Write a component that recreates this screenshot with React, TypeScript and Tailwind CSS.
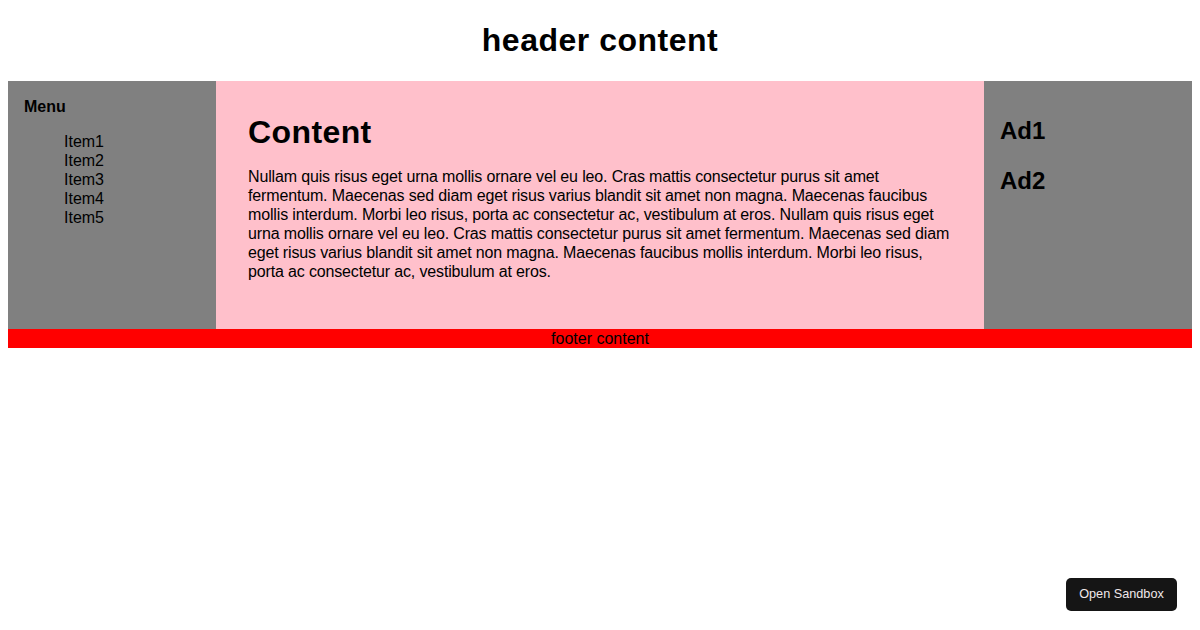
import React from "react";

const items = ["Item1", "Item2", "Item3", "Item4", "Item5"];

const text =
  "Nullam quis risus eget urna mollis ornare vel eu leo. Cras mattis consectetur purus sit amet fermentum. Maecenas sed diam eget risus varius blandit sit amet non magna. Maecenas faucibus mollis interdum. Morbi leo risus, porta ac consectetur ac, vestibulum at eros. Nullam quis risus eget urna mollis ornare vel eu leo. Cras mattis consectetur purus sit amet fermentum. Maecenas sed diam eget risus varius blandit sit amet non magna. Maecenas faucibus mollis interdum. Morbi leo risus, porta ac consectetur ac, vestibulum at eros.";

export default function App() {
  return (
    <div className="min-h-[630px] bg-white px-2 text-black text-base font-['Liberation_Sans',Arial,sans-serif]">
      <header className="h-[81px] flex items-center justify-center">
        <h1 className="text-[32px] font-bold leading-[37px] tracking-[0.5px]">header content</h1>
      </header>

      <div className="grid grid-cols-[208px_1fr_208px]">
        <nav className="bg-[#808080] p-4">
          <h4 className="font-bold leading-[19px] mb-4">Menu</h4>
          <ul className="pl-10 leading-[19px]">
            {items.map(i => (
              <li key={i}>{i}</li>
            ))}
          </ul>
        </nav>

        <main className="bg-[#ffc0cb] px-8 pt-[33px] pb-8">
          <h1 className="text-[32px] font-bold leading-[37px] tracking-[0.4px] mb-4">Content</h1>
          <p className="leading-[19px] tracking-[-0.15px] mb-4">{text}</p>
        </main>

        <aside className="bg-[#808080] p-4">
          <h2 className="text-2xl font-bold leading-[28px] mt-5 mb-[22px]">Ad1</h2>
          <h2 className="text-2xl font-bold leading-[28px]">Ad2</h2>
        </aside>
      </div>

      <footer className="bg-[#ff0000] h-[19px] leading-[19px] text-center">footer content</footer>

      <button className="fixed right-[23px] bottom-[19px] w-[111px] h-[33px] rounded-[5px] bg-[#151515] text-[#f0e8ea] text-[12.7px] flex items-center justify-center">
        Open Sandbox
      </button>
    </div>
  );
}
